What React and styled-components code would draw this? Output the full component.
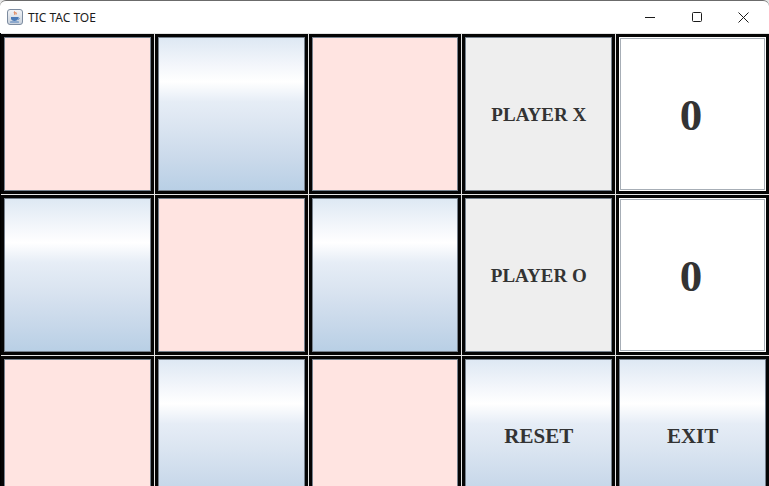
import React from 'react'
import styled, { createGlobalStyle, css } from 'styled-components'

const Global = createGlobalStyle`
  html, body {
    margin: 0;
    padding: 0;
    background: #ffffff;
    overflow: hidden;
  }
`

const Frame = styled.div`
  width: 769px;
  height: 486px;
  overflow: hidden;
  display: flex;
  flex-direction: column;
  background: #e6e6e6;
`

const TitleBar = styled.div`
  height: 33px;
  flex: 0 0 33px;
  display: flex;
  align-items: center;
  background: #ffffff;
  border-top: 1px solid #6b6b6b;
  border-radius: 6px 6px 0 0;
  box-sizing: border-box;
`

const AppIcon = styled.div`
  width: 16px;
  height: 16px;
  margin: 0 5px 0 7px;
  display: flex;
`

const Title = styled.span`
  font-family: "Noto Sans", "Open Sans", sans-serif;
  font-size: 12px;
  color: #1b1b1b;
  flex: 1;
`

const Controls = styled.div`
  display: flex;
  height: 100%;
  margin-right: 2px;
`

const ControlButton = styled.div`
  width: 47px;
  height: 100%;
  display: flex;
  align-items: center;
  justify-content: center;
`

const Board = styled.div`
  flex: 1;
  display: grid;
  grid-template-columns: repeat(5, 1fr);
  grid-auto-rows: 160px;
  gap: 1px;
  padding-top: 1px;
  border-left: 1px solid #000;
  background: #e4e4e4;
`

const blueGradient = css`
  background: linear-gradient(
    to bottom,
    #dde8f3 0%,
    #f3f6fb 18%,
    #ffffff 29%,
    #e6edf6 42%,
    #dbe5f1 58%,
    #cbdaeb 78%,
    #b8cfe5 100%
  );
`

const Cell = styled.div`
  box-sizing: border-box;
  border: 3px solid #050505;
  display: flex;
  align-items: center;
  justify-content: center;
  font-family: "Liberation Serif", "Times New Roman", serif;
  font-weight: bold;
  color: #333333;
  box-shadow: inset 0 0 0 1px #76818d;
  ${p => p.$kind === 'pink' && css`
    background: #ffe4e1;
  `}
  ${p => p.$kind === 'blue' && blueGradient}
  ${p => p.$kind === 'label' && css`
    background: #eeeeee;
    font-size: 19px;
    padding-top: 1px;
  `}
  ${p => p.$kind === 'score' && css`
    background: #ffffff;
    font-size: 45px;
    padding: 2px 3px 0 0;
    box-shadow: inset 0 0 0 1px #ffffff, inset 0 0 0 2px #a7aeb6;
  `}
  ${p => p.$kind === 'action' && css`
    ${blueGradient};
    font-size: 21px;
  `}
`

const JavaIcon = () => (
  <svg width="16" height="16" viewBox="0 0 16 16">
    <defs>
      <linearGradient id="jbg" x1="0" y1="0" x2="0" y2="1">
        <stop offset="0" stopColor="#f2f4f7" />
        <stop offset="1" stopColor="#c9d1dc" />
      </linearGradient>
    </defs>
    <rect x="0.5" y="0.5" width="15" height="15" rx="2.5" fill="url(#jbg)" stroke="#7d8ca0" />
    <path d="M7.5 2.5c-1 1 1 1.8 0 3M9 3c-.8.8.8 1.4 0 2.5" stroke="#e0662a" strokeWidth="1" fill="none" />
    <path d="M4 8h7v1.5c0 1.5-1.5 2.5-3.5 2.5S4 11 4 9.5z" fill="#4a7ab8" />
    <path d="M11 8.6c1.6 0 1.6 1.8 0 1.8" stroke="#4a7ab8" strokeWidth="0.9" fill="none" />
    <rect x="3" y="12.6" width="9" height="1" rx="0.5" fill="#4a7ab8" />
  </svg>
)

const Minimize = () => (
  <svg width="10" height="10" viewBox="0 0 10 10">
    <path d="M0 5.5h10" stroke="#1b1b1b" strokeWidth="1" />
  </svg>
)

const Maximize = () => (
  <svg width="10" height="10" viewBox="0 0 10 10">
    <rect x="0.5" y="0.5" width="9" height="9" rx="1" stroke="#1b1b1b" strokeWidth="1" fill="none" />
  </svg>
)

const Close = () => (
  <svg width="11" height="11" viewBox="0 0 11 11">
    <path d="M0.5 0.5l10 10M10.5 0.5l-10 10" stroke="#1b1b1b" strokeWidth="1" />
  </svg>
)

const cells = [
  { kind: 'pink' }, { kind: 'blue' }, { kind: 'pink' },
  { kind: 'label', text: 'PLAYER X' }, { kind: 'score', text: '0' },
  { kind: 'blue' }, { kind: 'pink' }, { kind: 'blue' },
  { kind: 'label', text: 'PLAYER O' }, { kind: 'score', text: '0' },
  { kind: 'pink' }, { kind: 'blue' }, { kind: 'pink' },
  { kind: 'action', text: 'RESET' }, { kind: 'action', text: 'EXIT' },
]

const App = () => {
  return (
    <React.Fragment>
      <Global />
      <Frame>
        <TitleBar>
          <AppIcon><JavaIcon /></AppIcon>
          <Title>TIC TAC TOE</Title>
          <Controls>
            <ControlButton><Minimize /></ControlButton>
            <ControlButton><Maximize /></ControlButton>
            <ControlButton><Close /></ControlButton>
          </Controls>
        </TitleBar>
        <Board>
          {cells.map((c, i) => (
            <Cell key={i} $kind={c.kind}>{c.text}</Cell>
          ))}
        </Board>
      </Frame>
    </React.Fragment>
  )
}

export default App
